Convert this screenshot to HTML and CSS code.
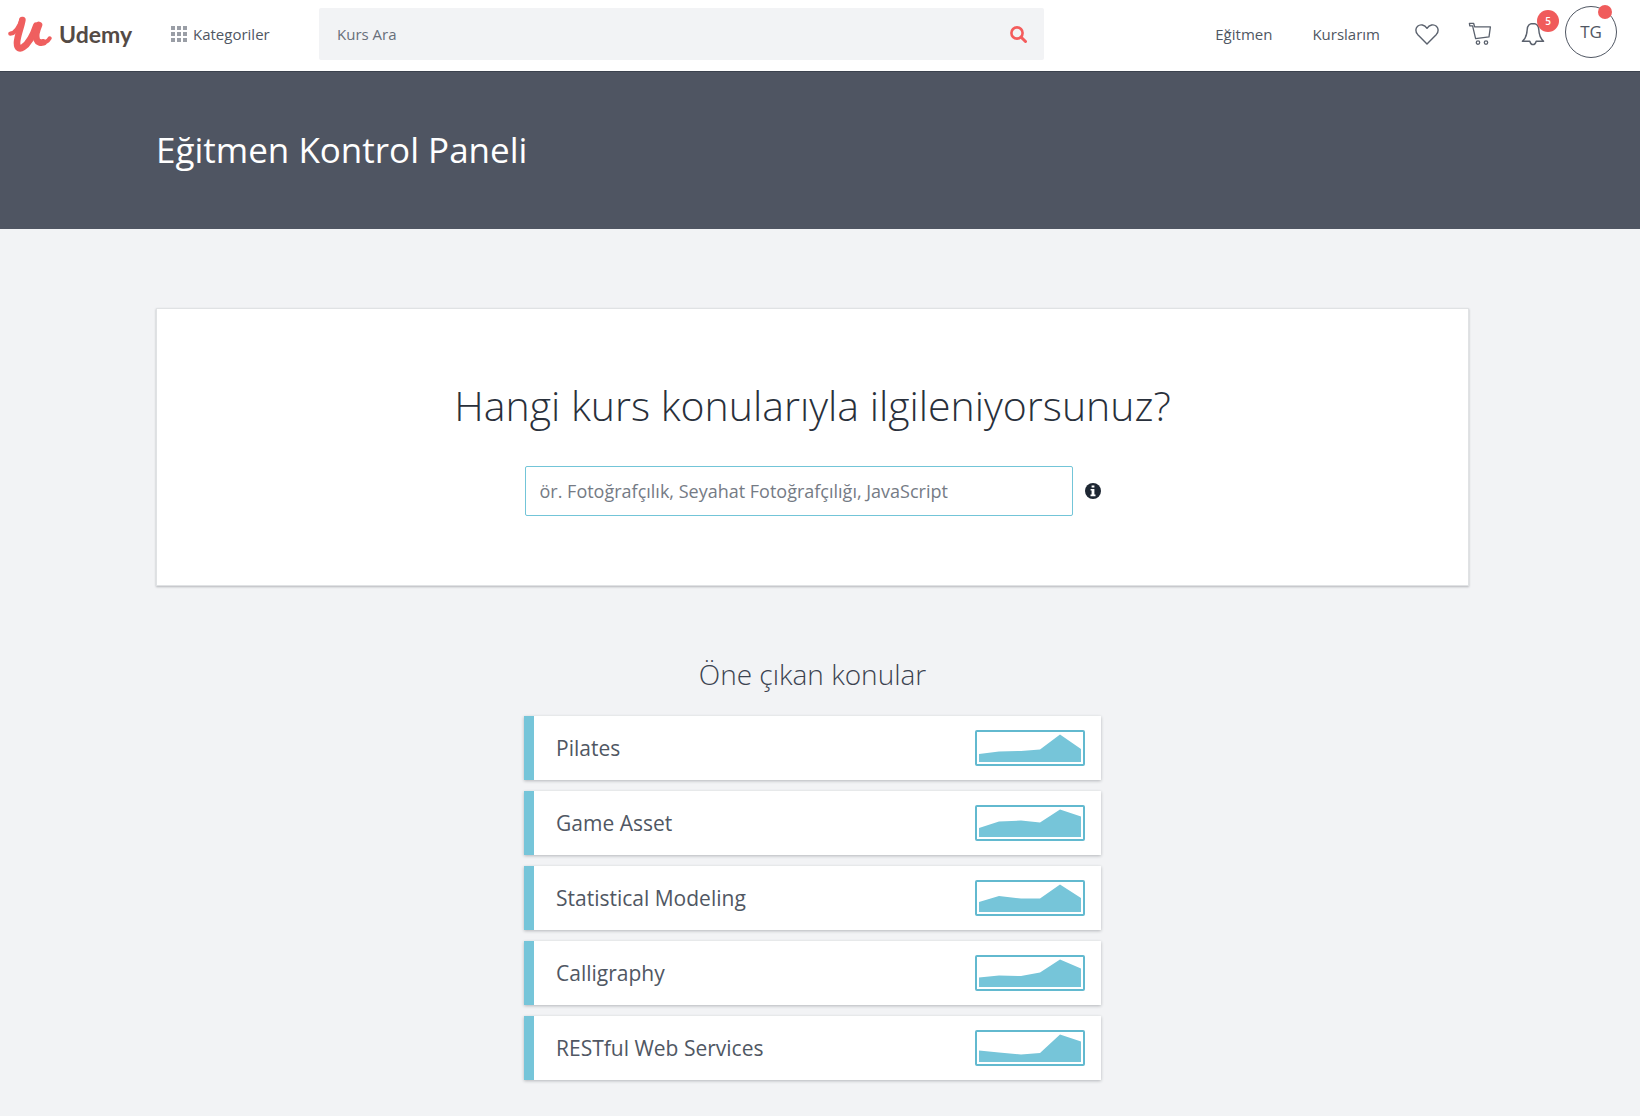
FILE: index.html
```html
<!DOCTYPE html>
<html lang="tr">
<head>
  <meta charset="UTF-8">
  <meta name="viewport" content="width=device-width, initial-scale=1">
  <title>Eğitmen Kontrol Paneli</title>
  <link rel="stylesheet" href="styles.css">
</head>
<body>

  <header class="header">
    <a href="#" class="logo">
      <svg class="logo-mark" viewBox="24 46 132 108" fill="none" stroke="#ef5f5f" stroke-linecap="round" stroke-linejoin="round">
        <path stroke-width="13" d="M31 99 C44 98 56 82 65 58"/>
        <path stroke-width="20" d="M67 58 C64 78 51 108 51 127 C51 144 60 146 69 140 C86 129 100 102 109 75"/>
        <path stroke-width="20" d="M117 73 C109 92 106 106 110 117 C113 125 122 127 130 125"/>
        <path stroke-width="12" d="M126 127 C138 126 145 120 149 113"/>
      </svg>
      <span class="logo-text">Udemy</span>
    </a>
    <button type="button" class="categories">
      <svg width="16" height="16" viewBox="0 0 16 16" fill="#9a9ea6">
        <path d="M0 0h4v4H0zM6 0h4v4H6zM12 0h4v4h-4zM0 6h4v4H0zM6 6h4v4H6zM12 6h4v4h-4zM0 12h4v4H0zM6 12h4v4H6zM12 12h4v4h-4z"/>
      </svg>
      Kategoriler
    </button>
    <form class="search">
      <input type="text" class="search-input" placeholder="Kurs Ara" aria-label="Kurs Ara">
      <button type="submit" class="search-button" aria-label="Ara">
        <svg width="17" height="17" viewBox="0 0 17 17" fill="none" stroke="#f45c5c">
          <circle cx="7" cy="7" r="5.6" stroke-width="2.6"/>
          <path d="M11.2 11.2l4.3 4.3" stroke-width="3" stroke-linecap="round"/>
        </svg>
      </button>
    </form>
    <nav class="nav">
      <a href="#" class="nav-link">Eğitmen</a>
      <a href="#" class="nav-link">Kurslarım</a>
      <a href="#" class="nav-icon" aria-label="İstek listesi">
        <svg width="24" height="24" viewBox="0 0 24 24" fill="none" stroke="#5a616d" stroke-width="1.4" stroke-linejoin="round">
          <path d="M12 22 L2.6 12.4 C0.2 9.8 0.4 6.2 2.6 4.2 C5.3 1.9 9.6 2.6 12 6.3 C14.4 2.6 18.7 1.9 21.4 4.2 C23.6 6.2 23.8 9.8 21.4 12.4 Z"/>
        </svg>
      </a>
      <a href="#" class="nav-icon" aria-label="Sepet">
        <svg width="24" height="24" viewBox="0 0 24 24" fill="none" stroke="#5a616d" stroke-width="1.3" stroke-linejoin="round">
          <path d="M1.4 1.3 H5.6 L6.6 4.8 H22.4 L21 14.8 L7.6 16.6 L4.6 3.9 H1.8 Z"/>
          <circle cx="10" cy="20.6" r="1.7"/>
          <circle cx="18" cy="20.6" r="1.7"/>
        </svg>
      </a>
      <a href="#" class="nav-icon" aria-label="Bildirimler">
        <svg width="24" height="24" viewBox="0 0 24 24" fill="none" stroke="#5a616d" stroke-width="1.4" stroke-linejoin="round">
          <path d="M12 1.5 C8.2 1.5 6.4 4.2 6.2 7.6 C6 12.5 4.6 16.4 1.4 19.2 H8.8 C9.4 21.4 10.5 22.6 12 22.6 C13.5 22.6 14.6 21.4 15.2 19.2 H22.6 C19.4 16.4 18 12.5 17.8 7.6 C17.6 4.2 15.8 1.5 12 1.5 Z"/>
        </svg>
        <span class="badge">5</span>
      </a>
      <a href="#" class="avatar">TG<span class="avatar-dot"></span></a>
    </nav>
  </header>

  <div class="hero">
    <div class="container">
      <h1>Eğitmen Kontrol Paneli</h1>
    </div>
  </div>

  <main>
    <section class="card container">
      <h2><label for="topic">Hangi kurs konularıyla ilgileniyorsunuz?</label></h2>
      <div class="topic-search">
        <input type="text" id="topic" placeholder="ör. Fotoğrafçılık, Seyahat Fotoğrafçılığı, JavaScript">
        <svg class="info" width="16" height="16" viewBox="0 0 16 16">
          <circle cx="8" cy="8" r="8" fill="#1e2733"/>
          <path fill="#fff" d="M6.6 2.4h2.8v2.2H6.6zM5.6 6h3.8v5.4h1.1v1.8H5.5v-1.8h1.1V7.6h-1z"/>
        </svg>
      </div>
    </section>

    <section class="topics">
      <h3>Öne çıkan konular</h3>
      <ul>
        <li><a href="#" class="topic">Pilates
          <svg class="chart" viewBox="0 0 102 28"><path d="M0 28V20L20 17.500L42 17L61 15.500L81 0.500L102 15V28Z"/></svg></a></li>
        <li><a href="#" class="topic">Game Asset
          <svg class="chart" viewBox="0 0 102 28"><path d="M0 28V19L20 12.500L42 11.500L61 13.500L81 0.500L102 7.500V28Z"/></svg></a></li>
        <li><a href="#" class="topic">Statistical Modeling
          <svg class="chart" viewBox="0 0 102 28"><path d="M0 28V18L20 12L42 14.500L61 14.500L81 0.500L102 14V28Z"/></svg></a></li>
        <li><a href="#" class="topic">Calligraphy
          <svg class="chart" viewBox="0 0 102 28"><path d="M0 28V18.500L20 16.500L42 17L61 13.500L81 0.500L102 9.500V28Z"/></svg></a></li>
        <li><a href="#" class="topic">RESTful Web Services
          <svg class="chart" viewBox="0 0 102 28"><path d="M0 28V16.500L20 18.500L42 20.500L61 19L81 0.500L102 7.500V28Z"/></svg></a></li>
      </ul>
    </section>
  </main>

</body>
</html>
```
FILE: styles.css
```css
* {
  box-sizing: border-box;
}
body {
  margin: 0;
  background-color: #f2f3f5;
  color: #505763;
  font-family: "Open Sans", sans-serif;
  font-size: 15px;
}
a {
  color: inherit;
  text-decoration: none;
}
button, input {
  font-family: inherit;
  color: inherit;
}
button {
  border: 0;
  padding: 0;
  background: none;
  cursor: pointer;
}

/* Header */
.header {
  display: flex;
  align-items: center;
  height: 71px;
  padding: 0 23px 3px 8px;
  background-color: #fff;
}
.logo {
  display: flex;
  align-items: center;
  gap: 7px;
  width: 163px;
}
.logo-mark {
  width: 44px;
  height: 36px;
}
.logo-text {
  color: #544a45;
  font-family: Lato, sans-serif;
  font-size: 23px;
  font-weight: 700;
}
.categories {
  display: flex;
  align-items: center;
  gap: 6px;
  width: 148px;
  font-size: 15px;
}
.search {
  display: flex;
  flex: 1;
  max-width: 725px;
  height: 52px;
  border-radius: 2px;
  background-color: #f2f3f5;
}
.search-input {
  flex: 1;
  padding: 0 18px;
  border: 0;
  outline: 0;
  background: none;
  font-size: 15px;
}
.search-input::placeholder {
  color: #686f7a;
  opacity: 1;
}
.search-button {
  display: flex;
  align-items: center;
  justify-content: center;
  width: 52px;
}
.nav {
  display: flex;
  align-items: center;
  margin-left: auto;
}
.nav-link {
  margin-right: 40px;
}
.nav-link + .nav-icon {
  margin-left: -5px;
}
.nav-icon {
  position: relative;
  display: flex;
  margin-right: 29px;
}
.nav-icon:nth-last-child(2) {
  margin-right: 20px;
}
.badge {
  position: absolute;
  top: -12px;
  right: -14px;
  width: 22px;
  height: 22px;
  border-radius: 50%;
  background-color: #f05b5b;
  color: #fff;
  font-size: 10px;
  font-weight: 600;
  line-height: 22px;
  text-align: center;
}
.avatar {
  position: relative;
  width: 52px;
  height: 52px;
  margin-bottom: 5px;
  border: 1px solid #505763;
  border-radius: 50%;
  font-size: 17px;
  line-height: 50px;
  text-align: center;
}
.avatar-dot {
  position: absolute;
  top: -2px;
  right: 4px;
  width: 14px;
  height: 14px;
  border-radius: 50%;
  background-color: #f05b5b;
}

/* Page title */
.container {
  width: 1313px;
  max-width: 100%;
  margin: 0 auto;
}
.hero {
  padding: 53px 15px 55px 0;
  border-top: 1px solid #3b424e;
  background-color: #4f5562;
}
.hero h1 {
  margin: 0;
  color: #fff;
  font-size: 35px;
  font-weight: 400;
  line-height: 49px;
}
main {
  padding: 79px 15px 36px 0;
}

/* Topic search */
.card {
  padding: 68px 20px 69px;
  border: 1px solid #e0e2e4;
  background-color: #fff;
  box-shadow: 0 1px 2px #b4b6ba;
  text-align: center;
}
.card h2 {
  margin: 0 0 33px;
  color: #29303b;
  font-size: 41px;
  font-weight: 300;
  line-height: 56px;
}
.topic-search {
  display: flex;
  align-items: center;
  width: 576px;
  max-width: 100%;
  margin: 0 auto;
}
.topic-search input {
  flex: 1;
  height: 50px;
  padding: 0 14px;
  border: 1px solid #73c5d8;
  border-radius: 2px;
  outline: 0;
  font-size: 18px;
}
.topic-search input::placeholder {
  color: #757b85;
  opacity: 1;
}
.info {
  margin-left: 12px;
}

/* Topic list */
.topics {
  width: 577px;
  max-width: 100%;
  margin: 68px auto 0;
}
.topics h3 {
  margin: 0 0 22px;
  color: #3c4350;
  font-size: 28px;
  font-weight: 300;
  line-height: 40px;
  text-align: center;
}
.topics ul {
  margin: 0;
  padding: 0;
  list-style: none;
}
.topics li + li {
  margin-top: 11px;
}
.topic {
  display: flex;
  align-items: center;
  justify-content: space-between;
  height: 64px;
  padding: 0 16px 0 22px;
  border-left: 10px solid #76c5d9;
  background-color: #fff;
  box-shadow: 0 1px 3px #b4b6ba;
  font-size: 21px;
}
.chart {
  width: 110px;
  height: 36px;
  padding: 2px;
  border: 2px solid #62b9cf;
  border-radius: 2px;
  fill: #76c5d9;
}
```
